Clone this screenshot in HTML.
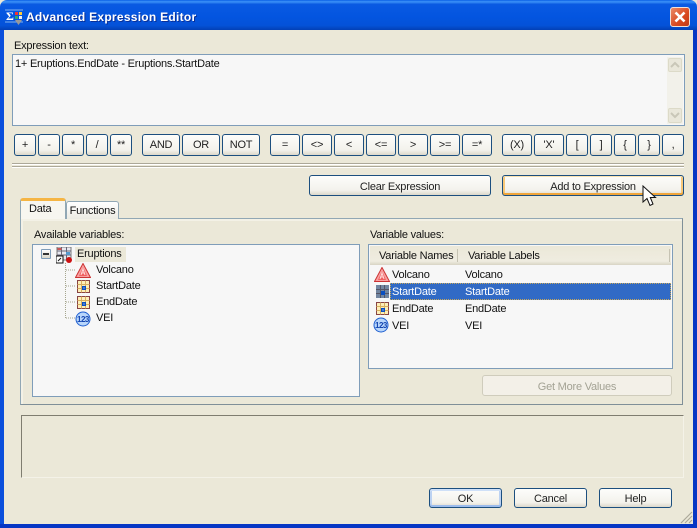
<!DOCTYPE html>
<html><head><meta charset="utf-8"><style>
html,body{margin:0;padding:0}
body{width:697px;height:528px;overflow:hidden;position:relative;background:#ebe8d8;font:11px/13px "Liberation Sans",sans-serif;color:#111;letter-spacing:-.22px}
div{position:absolute;box-sizing:border-box;white-space:nowrap}
.t{line-height:13px}
.b{border:1px solid #1c4f7f;border-radius:3px;background:linear-gradient(#fdfdfb,#f3f2ec 75%,#dcd8ca);text-align:center;height:22px;line-height:21px;color:#222}
.w{line-height:22px}
.box{background:#f7f7f7;border:1px solid #7f9db9}
</style></head><body>
<div style="left:0;top:0;width:697px;height:30px;border-radius:7px 7px 0 0;background:linear-gradient(#0a5fe6,#3d93f8 6%,#0a5ae2 14%,#0355e0 55%,#0452d8 85%,#0340b5)"></div>
<div style="left:0;top:30px;width:4px;height:498px;background:#0a4fdc"></div>
<div style="left:693px;top:30px;width:4px;height:498px;background:#0636c4"></div>
<div style="left:0;top:524px;width:697px;height:4px;background:#0636c4"></div>
<svg style="position:absolute;left:5px;top:9px" width="18" height="17" viewBox="0 0 18 17"><text x="1" y="11" font-family="Liberation Serif" font-weight="bold" font-size="12" fill="#fff">Σ</text><path d="M0 1h18M0 13h18" stroke="#7fb0ee"/><rect x="10" y="3" width="3" height="3" fill="#e33"/><rect x="14" y="3" width="3" height="3" fill="#fc3"/><rect x="10" y="7" width="3" height="3" fill="#3a6"/><rect x="14" y="7" width="3" height="3" fill="#eee"/><path d="M10 11h7l-3.500 5z" fill="#999"/></svg>
<div class="t" style="left:26px;top:10px;font-size:12px;font-weight:bold;color:#fff;letter-spacing:.27px;text-shadow:1px 1px 0 #0a2f96;line-height:15px">Advanced Expression Editor</div>
<div style="left:670px;top:7px;width:20px;height:20px;border:1px solid #f0e0d8;border-radius:3px;background:linear-gradient(135deg,#e98a68,#d9481f 60%,#c03a18)"></div>
<svg style="position:absolute;left:670px;top:7px" width="20" height="20"><path d="M5.500 5.500l9 9M14.500 5.500l-9 9" stroke="#fff" stroke-width="2.600"/></svg>

<div class="t" style="left:14px;top:40px">Expression text:</div>
<div class="box" style="left:12px;top:54px;width:673px;height:72px"></div>
<div class="t" style="left:15px;top:58px">1+ Eruptions.EndDate - Eruptions.StartDate</div>
<div style="left:667px;top:57px;width:16px;height:67px;background:#f2f1ea"></div>
<div style="left:668px;top:58px;width:14px;height:14px;background:#e9e7da;border:1px solid #dcdac8;border-radius:2px"></div>
<div style="left:668px;top:108px;width:14px;height:15px;background:#e9e7da;border:1px solid #dcdac8;border-radius:2px"></div>
<svg style="position:absolute;left:668px;top:58px" width="14" height="66"><path d="M3 9l4-4 4 4M3 55l4 4 4-4" fill="none" stroke="#c9c7b8" stroke-width="2"/></svg>

<div class="b" style="left:14px;top:134px;width:22px">+</div>
<div class="b" style="left:38px;top:134px;width:22px">-</div>
<div class="b" style="left:62px;top:134px;width:22px">*</div>
<div class="b" style="left:86px;top:134px;width:22px">/</div>
<div class="b" style="left:110px;top:134px;width:22px">**</div>
<div class="b" style="left:142px;top:134px;width:38px">AND</div>
<div class="b" style="left:182px;top:134px;width:38px">OR</div>
<div class="b" style="left:222px;top:134px;width:38px">NOT</div>
<div class="b" style="left:270px;top:134px;width:30px">=</div>
<div class="b" style="left:302px;top:134px;width:30px">&lt;&gt;</div>
<div class="b" style="left:334px;top:134px;width:30px">&lt;</div>
<div class="b" style="left:366px;top:134px;width:30px">&lt;=</div>
<div class="b" style="left:398px;top:134px;width:30px">&gt;</div>
<div class="b" style="left:430px;top:134px;width:30px">&gt;=</div>
<div class="b" style="left:462px;top:134px;width:30px">=*</div>
<div class="b" style="left:502px;top:134px;width:30px">(X)</div>
<div class="b" style="left:534px;top:134px;width:30px">'X'</div>
<div class="b" style="left:566px;top:134px;width:22px">[</div>
<div class="b" style="left:590px;top:134px;width:22px">]</div>
<div class="b" style="left:614px;top:134px;width:22px">{</div>
<div class="b" style="left:638px;top:134px;width:22px">}</div>
<div class="b" style="left:662px;top:134px;width:22px">,</div>

<div style="left:12px;top:163px;width:672px;height:1px;background:#aca899"></div>
<div style="left:12px;top:164px;width:672px;height:1px;background:#fff"></div>
<div style="left:12px;top:166px;width:672px;height:1px;background:#aca899"></div>
<div style="left:12px;top:167px;width:672px;height:1px;background:#fff"></div>

<div class="b w" style="left:309px;top:175px;width:182px;height:21px">Clear Expression</div>
<div class="b w" style="left:502px;top:175px;width:182px;height:21px;box-shadow:inset 0 -2px 0 #f0a53a,inset 0 1px 0 #fbe3b0,inset 2px 0 0 #f8c878,inset -2px 0 0 #f8c878">Add to Expression</div>

<div style="left:20px;top:218px;width:663px;height:187px;border:1px solid #91a7b4;border-right-color:#7f8f98;border-bottom-color:#7f8f98;background:#ebe8d8;box-shadow:inset 2px 2px 0 #f3f1e6"></div>
<div style="left:66px;top:201px;width:53px;height:18px;border:1px solid #91a7b4;border-bottom:0;border-radius:3px 3px 0 0;background:linear-gradient(#fff,#ecebe3);text-align:center;line-height:18px">Functions</div>
<div style="left:20px;top:198px;width:46px;height:21px;border:1px solid #91a7b4;border-top:3px solid #f5b544;border-bottom:0;border-radius:3px 3px 0 0;background:#f7f6f0;padding-left:8px;line-height:17px">Data</div>

<div class="t" style="left:34px;top:229px">Available variables:</div>
<div class="box" style="left:32px;top:244px;width:328px;height:153px"></div>
<div style="left:41px;top:249px;width:10px;height:10px;border:1px solid #7f9db9;border-radius:1px;background:linear-gradient(#fff,#d8d5c8)"></div>
<div style="left:43px;top:253px;width:6px;height:2px;background:#333"></div>
<svg style="position:absolute;left:56px;top:247px" width="17" height="17"><rect x="1" y="0" width="14" height="13" fill="#e8e8f0" stroke="#777"/><path d="M1 4h14M1 8h14M5.500 0v13M10.500 0v13" stroke="#667" stroke-width="1"/><rect x="1.500" y="1" width="4" height="2" fill="#c55"/><rect x="10" y="5" width="4" height="3" fill="#59c"/><rect x="0" y="9" width="7" height="7" fill="#fff" stroke="#111"/><path d="M2 14l3-3" stroke="#111"/><circle cx="13" cy="13" r="3" fill="#c11"/></svg>
<div style="left:75px;top:247px;width:51px;height:15px;background:#ebe8d8;padding-left:2px;line-height:15px">Eruptions</div>
<svg style="position:absolute;left:64px;top:262px" width="12" height="60"><path d="M1.500 1V56M2 8h9M2 24h9M2 40h9M2 56h9" stroke="#a5a58d" stroke-dasharray="1 1" fill="none"/></svg>

<svg width="0" height="0" style="position:absolute"><defs>
<g id="vol"><path d="M8 .5L15.500 14.500H.5z" fill="#f8a0a0" stroke="#c33"/><path d="M8 4l4 9H4z" fill="#f06060"/><path d="M6 12l2-6 2 6M6.800 10h2.400" fill="none" stroke="#fdd"/></g>
<g id="dat"><rect x=".5" y=".5" width="12" height="12" fill="#fdeeb8" stroke="#844"/><path d="M.5 4.500h12M.5 8.500h12M4.500 .5v12M8.500 .5v12" stroke="#d8b060"/><rect x="5" y="6" width="4" height="4" fill="#0a4fc0"/><rect x="6.500" y="7.500" width="1" height="1" fill="#fff"/></g>
<g id="num"><circle cx="8" cy="8" r="7" fill="#b8d6fb" stroke="#1f5fd0"/><text x="2" y="11" font-size="8" font-weight="bold" letter-spacing="-.5" fill="#1446b0" font-family="Liberation Sans">123</text></g>
</defs></svg>

<svg style="position:absolute;left:75px;top:263px" width="16" height="15"><use href="#vol"/></svg>
<div class="t" style="left:96px;top:264px">Volcano</div>
<svg style="position:absolute;left:77px;top:280px" width="13" height="13"><use href="#dat"/></svg>
<div class="t" style="left:96px;top:280px">StartDate</div>
<svg style="position:absolute;left:77px;top:296px" width="13" height="13"><use href="#dat"/></svg>
<div class="t" style="left:96px;top:296px">EndDate</div>
<svg style="position:absolute;left:75px;top:311px" width="16" height="16"><use href="#num"/></svg>
<div class="t" style="left:96px;top:312px">VEI</div>

<div class="t" style="left:370px;top:229px">Variable values:</div>
<div class="box" style="left:368px;top:244px;width:305px;height:125px"></div>
<div style="left:370px;top:246px;width:301px;height:19px;background:linear-gradient(#ebe8d8,#efece0 80%,#d8d4c4)"></div>
<div style="left:457px;top:249px;width:1px;height:13px;background:#c6c3b3"></div>
<div style="left:669px;top:249px;width:1px;height:13px;background:#c6c3b3"></div>
<div class="t" style="left:379px;top:250px">Variable Names</div>
<div class="t" style="left:468px;top:250px">Variable Labels</div>

<svg style="position:absolute;left:374px;top:267px" width="16" height="15"><use href="#vol"/></svg>
<div class="t" style="left:392px;top:269px">Volcano</div>
<div class="t" style="left:465px;top:269px">Volcano</div>
<div style="left:390px;top:283px;width:281px;height:17px;background:#316ac5;outline:1px dotted #c7a75a;outline-offset:-1px"></div>
<svg style="position:absolute;left:376px;top:285px" width="13" height="13"><rect width="13" height="13" fill="#7286a0"/><path d="M0 4.500h13M0 8.500h13M4.500 0v13M8.500 0v13" stroke="#556"/><rect x="5" y="6" width="4" height="4" fill="#0a4fc0"/></svg>
<div class="t" style="left:392px;top:286px;color:#fff">StartDate</div>
<div class="t" style="left:465px;top:286px;color:#fff">StartDate</div>
<svg style="position:absolute;left:376px;top:302px" width="13" height="13"><use href="#dat"/></svg>
<div class="t" style="left:392px;top:303px">EndDate</div>
<div class="t" style="left:465px;top:303px">EndDate</div>
<svg style="position:absolute;left:373px;top:317px" width="16" height="16"><use href="#num"/></svg>
<div class="t" style="left:392px;top:320px">VEI</div>
<div class="t" style="left:465px;top:320px">VEI</div>

<div class="b w" style="left:482px;top:375px;width:190px;height:21px;border-color:#cfccbc;background:#f3f0e8;color:#a3a294">Get More Values</div>

<div style="left:21px;top:415px;width:663px;height:63px;border:1px solid;border-color:#7f7d70 #f4f2e8 #f4f2e8 #7f7d70"></div>

<div class="b" style="left:429px;top:488px;width:73px;height:20px;line-height:21px;box-shadow:inset 0 2px 0 #cfe0f8,inset 0 -2px 0 #9cbcec,inset 2px 0 0 #bcd2f2,inset -2px 0 0 #bcd2f2">OK</div>
<div class="b" style="left:514px;top:488px;width:73px;height:20px;line-height:21px">Cancel</div>
<div class="b" style="left:599px;top:488px;width:73px;height:20px;line-height:21px">Help</div>

<svg style="position:absolute;left:680px;top:510px" width="13" height="14"><path d="M12 2L1 13M12 6L5 13M12 10L9 13" stroke="#aca899" stroke-width="1.200"/></svg>

<svg style="position:absolute;left:642px;top:185px" width="15" height="23"><path d="M1 1V17L5 13.500 8 20.500 11 19 8.300 12.500H13.500z" fill="#fff" stroke="#111"/></svg>
</body></html>
